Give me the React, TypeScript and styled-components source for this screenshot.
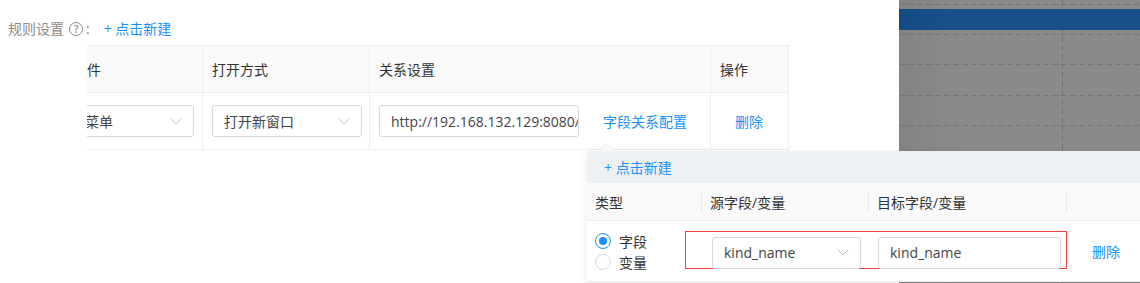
import React from 'react';
import styled, { createGlobalStyle } from 'styled-components';

const GlobalStyle = createGlobalStyle`
  html, body {
    margin: 0;
    padding: 0;
    background: #fff;
  }
  body {
    font-family: "Open Sans", "Noto Sans CJK SC", sans-serif;
    font-size: 14px;
    color: #333;
  }
  * {
    box-sizing: border-box;
  }
`;

const LINK = '#1890ff';
const LINE = '#ebeef5';

const Page = styled.div`
  position: relative;
  width: 1140px;
  height: 283px;
  overflow: hidden;
  display: flex;
`;

const Content = styled.div`
  flex: 1;
  padding: 19px 0 0 8px;
`;

const LabelRow = styled.div`
  display: flex;
  align-items: center;
  height: 20px;
  line-height: 20px;
  margin-bottom: 6px;
`;

const Label = styled.span`
  color: #8c8c8c;
  display: flex;
  align-items: center;
`;

const QuestionIcon = styled.span`
  display: inline-flex;
  align-items: center;
  justify-content: center;
  width: 14px;
  height: 14px;
  margin: 0 3px 0 5px;
  border: 1.5px solid #8c8c8c;
  border-radius: 50%;
  font-size: 10px;
  font-weight: 600;
  line-height: 1;
  color: #8c8c8c;
`;

const Link = styled.a<{ $ml?: number }>`
  color: ${LINK};
  text-decoration: none;
  cursor: pointer;
  margin-left: ${(p) => p.$ml ?? 0}px;
  white-space: nowrap;
`;

const TableClip = styled.div`
  margin-left: 79px;
  width: 702px;
  overflow: hidden;
`;

const RuleTable = styled.div`
  margin-left: -23px;
  display: grid;
  grid-template-columns: 139px 167px 341px 78px;
  border-top: 1px solid ${LINE};
`;

const HeadCell = styled.div`
  height: 47px;
  display: flex;
  align-items: center;
  padding-left: 9px;
  background: #fafafa;
  border-right: 1px solid ${LINE};
  border-bottom: 1px solid ${LINE};
  color: #333;
`;

const BodyCell = styled.div<{ $pl?: number }>`
  height: 57px;
  display: flex;
  align-items: center;
  padding-left: ${(p) => p.$pl ?? 9}px;
  border-right: 1px solid ${LINE};
  border-bottom: 1px solid ${LINE};
`;

const SelectBox = styled.div<{ $w: number; $pl?: number }>`
  width: ${(p) => p.$w}px;
  height: 32px;
  display: flex;
  align-items: center;
  justify-content: space-between;
  padding: 0 11px 0 ${(p) => p.$pl ?? 11}px;
  border: 1px solid #d9d9d9;
  border-radius: 3px;
  background: #fff;
  color: #444;
  white-space: nowrap;
`;

const TextBox = styled.div<{ $w: number }>`
  width: ${(p) => p.$w}px;
  height: 32px;
  display: flex;
  align-items: center;
  padding: 0 11px;
  border: 1px solid #d9d9d9;
  border-radius: 3px;
  background: #fff;
  color: #444;
  white-space: nowrap;
  overflow: hidden;
`;

const Chevron = () => (
  <svg width="12" height="7" viewBox="0 0 12 7">
    <polyline points="0.5,0.5 6,6 11.5,0.5" fill="none" stroke="#bfbfbf" strokeWidth="1" />
  </svg>
);

/* dimmed grid canvas on the right */
const GridPanel = styled.div`
  position: relative;
  width: 241px;
  height: 283px;
  padding-top: 4px;
  background-color: #8a8a8a;
  background-image:
    linear-gradient(to right, rgba(0, 0, 0, 0.05), rgba(0, 0, 0, 0) 60px),
    repeating-linear-gradient(to bottom, #747474 0 6px, transparent 6px 9px);
  background-size: 100% 100%, 1px 100%;
  background-position: 0 0, 163px 0;
  background-repeat: no-repeat;
`;

const GridLine = styled.div<{ $mt: number }>`
  height: 1px;
  margin-top: ${(p) => p.$mt}px;
  background-image: repeating-linear-gradient(to right, #747474 0 6px, transparent 6px 9px);
`;

const BlueBar = styled.div`
  height: 21px;
  margin-top: 4px;
  background: linear-gradient(to right, #144b83, #17508b 50px);
`;

/* popover */
const Popover = styled.div`
  position: absolute;
  left: 587px;
  top: 151px;
  width: 620px;
  background: #fff;
  box-shadow: 0 2px 8px rgba(0, 0, 0, 0.08);
`;

const Arrow = styled.div`
  position: absolute;
  left: 15px;
  top: -5px;
  width: 10px;
  height: 10px;
  background: #fafafa;
  transform: rotate(45deg);
  box-shadow: -1px -1px 2px rgba(0, 0, 0, 0.06);
`;

const PopBand = styled.div`
  position: relative;
  height: 32px;
  display: flex;
  align-items: center;
  padding-left: 17px;
  background: #eef1f4;
`;

const PopHead = styled.div`
  display: flex;
  height: 38px;
  background: #fafafa;
  border-bottom: 1px solid ${LINE};
`;

const PopHeadCell = styled.div<{ $w: number; $sep?: boolean }>`
  position: relative;
  width: ${(p) => p.$w}px;
  display: flex;
  align-items: center;
  padding-left: 8px;
  color: #333;
  &::after {
    content: '';
    display: ${(p) => (p.$sep ? 'block' : 'none')};
    position: absolute;
    right: 0;
    top: 8px;
    height: 21px;
    width: 1px;
    background: #e8e8e8;
  }
`;

const PopRow = styled.div`
  display: flex;
  align-items: center;
  height: 61px;
  border-bottom: 1px solid ${LINE};
`;

const TypeCell = styled.div`
  width: 98px;
  padding-left: 8px;
  display: flex;
  flex-direction: column;
  margin-top: 1px;
`;

const RadioLine = styled.label`
  display: flex;
  align-items: center;
  height: 21px;
  color: #333;
`;

const RadioCircle = styled.span<{ $checked?: boolean }>`
  position: relative;
  width: 16px;
  height: 16px;
  margin-right: 8px;
  border-radius: 50%;
  border: 1px solid ${(p) => (p.$checked ? LINK : '#d9d9d9')};
  background: #fff;
  &::after {
    content: '';
    display: ${(p) => (p.$checked ? 'block' : 'none')};
    position: absolute;
    left: 3px;
    top: 3px;
    width: 8px;
    height: 8px;
    border-radius: 50%;
    background: ${LINK};
  }
`;

const ErrorBox = styled.div`
  width: 382px;
  height: 38px;
  display: flex;
  align-items: flex-start;
  gap: 17px;
  padding: 5px 0 0 26px;
  border: 1px solid #f03c3c;
  margin-top: -3px;
`;

const OpCell = styled.div`
  padding-left: 25px;
`;

export default function App() {
  return (
    <>
      <GlobalStyle />
      <Page>
        <Content>
          <LabelRow>
            <Label>
              规则设置<QuestionIcon>?</QuestionIcon>:
            </Label>
            <Link $ml={14}>+ 点击新建</Link>
          </LabelRow>
          <TableClip>
            <RuleTable>
              <HeadCell>条件</HeadCell>
              <HeadCell>打开方式</HeadCell>
              <HeadCell>关系设置</HeadCell>
              <HeadCell>操作</HeadCell>

              <BodyCell>
                <SelectBox $w={121}>
                  <span>菜单</span>
                  <Chevron />
                </SelectBox>
              </BodyCell>
              <BodyCell>
                <SelectBox $w={150}>
                  <span>打开新窗口</span>
                  <Chevron />
                </SelectBox>
              </BodyCell>
              <BodyCell>
                <TextBox $w={200}>http://192.168.132.129:8080/</TextBox>
                <Link $ml={24}>字段关系配置</Link>
              </BodyCell>
              <BodyCell $pl={24}>
                <Link>删除</Link>
              </BodyCell>
            </RuleTable>
          </TableClip>
        </Content>

        <GridPanel>
          <GridLine $mt={0} />
          <BlueBar />
          <GridLine $mt={4} />
          <GridLine $mt={29} />
          <GridLine $mt={30} />
          <GridLine $mt={29} />
          <GridLine $mt={30} />
        </GridPanel>

        <Popover>
          <Arrow />
          <PopBand>
            <Link>+ 点击新建</Link>
          </PopBand>
          <PopHead>
            <PopHeadCell $w={115} $sep>类型</PopHeadCell>
            <PopHeadCell $w={167} $sep>源字段/变量</PopHeadCell>
            <PopHeadCell $w={198} $sep>目标字段/变量</PopHeadCell>
            <PopHeadCell $w={140} />
          </PopHead>
          <PopRow>
            <TypeCell>
              <RadioLine>
                <RadioCircle $checked />
                字段
              </RadioLine>
              <RadioLine>
                <RadioCircle />
                变量
              </RadioLine>
            </TypeCell>
            <ErrorBox>
              <SelectBox $w={149} $pl={11}>
                <span>kind_name</span>
                <Chevron />
              </SelectBox>
              <TextBox $w={183}>kind_name</TextBox>
            </ErrorBox>
            <OpCell>
              <Link>删除</Link>
            </OpCell>
          </PopRow>
        </Popover>
      </Page>
    </>
  );
}
